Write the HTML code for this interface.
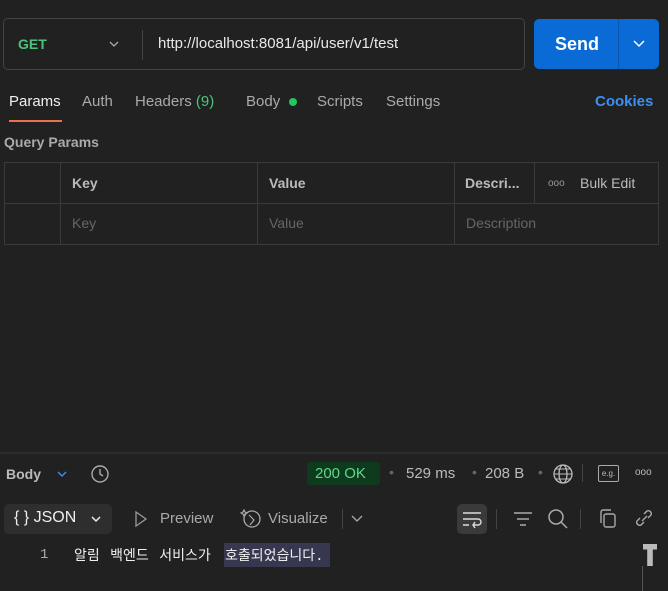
<!DOCTYPE html>
<html><head><meta charset="utf-8"><style>
*{margin:0;padding:0;box-sizing:border-box}
body{width:668px;height:591px;background:#212121;font-family:"Liberation Sans","Noto Sans CJK KR",sans-serif;color:#d0d0d0;position:relative;overflow:hidden;font-size:14px}
.a{position:absolute;white-space:nowrap}
</style></head><body>
<div class="a" style="left:3px;top:18px;width:522px;height:52px;border:1px solid #444;border-radius:5px;background:#212121"></div>
<div class="a" style="left:18px;top:36px;color:#4fc27a;font-weight:bold;font-size:14px">GET</div>
<svg class="a" style="left:108px;top:39px" width="12" height="10"><path d="M2 3l4 4 4-4" stroke="#aaa" stroke-width="1.3" fill="none"/></svg>
<div class="a" style="left:142px;top:30px;width:1px;height:30px;background:#444"></div>
<div class="a" style="left:158px;top:35px;color:#e8e8e8;font-size:15px">http://localhost:8081/api/user/v1/test</div>
<div class="a" style="left:534px;top:19px;width:125px;height:50px;background:#0a6bd6;border-radius:5px"></div>
<div class="a" style="left:618px;top:19px;width:1px;height:50px;background:#0957b0"></div>
<div class="a" style="left:555px;top:34px;color:#fff;font-weight:bold;font-size:18px">Send</div>
<svg class="a" style="left:632px;top:39px" width="14" height="10"><path d="M2 2l5 5 5-5" stroke="#fff" stroke-width="1.5" fill="none"/></svg>

<div class="a" style="left:9px;top:93px;color:#f0f0f0;font-size:15px">Params</div>
<div class="a" style="left:9px;top:120px;width:53px;height:2px;background:#e8734a"></div>
<div class="a" style="left:82px;top:93px;color:#aaa;font-size:15px">Auth</div>
<div class="a" style="left:135px;top:93px;color:#aaa;font-size:15px">Headers <span style="color:#4fc27a">(9)</span></div>
<div class="a" style="left:246px;top:93px;color:#aaa;font-size:15px">Body</div>
<div class="a" style="left:289px;top:98px;width:8px;height:8px;border-radius:50%;background:#22c55e"></div>
<div class="a" style="left:317px;top:93px;color:#aaa;font-size:15px">Scripts</div>
<div class="a" style="left:386px;top:93px;color:#aaa;font-size:15px">Settings</div>
<div class="a" style="left:595px;top:93px;color:#3d8ff0;font-weight:bold;font-size:15px">Cookies</div>
<div class="a" style="left:4px;top:134px;color:#aaa;font-weight:bold;font-size:14px">Query Params</div>

<div class="a" style="left:4px;top:162px;width:655px;height:83px;border:1px solid #3a3a3a"></div>
<div class="a" style="left:4px;top:203px;width:655px;height:1px;background:#3a3a3a"></div>
<div class="a" style="left:60px;top:162px;width:1px;height:83px;background:#3a3a3a"></div>
<div class="a" style="left:257px;top:162px;width:1px;height:83px;background:#3a3a3a"></div>
<div class="a" style="left:454px;top:162px;width:1px;height:83px;background:#3a3a3a"></div>
<div class="a" style="left:534px;top:162px;width:1px;height:41px;background:#3a3a3a"></div>
<div class="a" style="left:72px;top:175px;color:#bbb;font-weight:bold">Key</div>
<div class="a" style="left:269px;top:175px;color:#bbb;font-weight:bold">Value</div>
<div class="a" style="left:465px;top:175px;color:#bbb;font-weight:bold">Descri...</div>
<div class="a" style="left:548px;top:178px;color:#999;font-size:10px">ooo</div>
<div class="a" style="left:580px;top:175px;color:#bbb;font-size:14px">Bulk Edit</div>
<div class="a" style="left:72px;top:215px;color:#666">Key</div>
<div class="a" style="left:269px;top:215px;color:#666">Value</div>
<div class="a" style="left:466px;top:215px;color:#666">Description</div>

<div class="a" style="left:0;top:452px;width:668px;height:2px;background:#2c2c2c"></div>
<div class="a" style="left:6px;top:466px;color:#bbb;font-weight:bold;font-size:14px">Body</div>
<svg class="a" style="left:56px;top:469px" width="12" height="10"><path d="M2 3l4 4 4-4" stroke="#3d8ff0" stroke-width="1.4" fill="none"/></svg>
<svg class="a" style="left:89px;top:463px" width="22" height="22"><circle cx="11" cy="11" r="8" stroke="#aaa" stroke-width="1.4" fill="none"/><path d="M11 6v5l3 2" stroke="#aaa" stroke-width="1.4" fill="none"/></svg>
<div class="a" style="left:307px;top:462px;width:73px;height:23px;background:#0e3a1d;border-radius:3px"></div>
<div class="a" style="left:315px;top:465px;color:#5ed98a;font-size:15px">200 OK</div>
<div class="a" style="left:389px;top:464px;color:#666">•</div>
<div class="a" style="left:406px;top:465px;color:#bbb;font-size:15px">529 ms</div>
<div class="a" style="left:472px;top:464px;color:#666">•</div>
<div class="a" style="left:485px;top:465px;color:#bbb;font-size:15px">208 B</div>
<div class="a" style="left:538px;top:464px;color:#666">•</div>
<svg class="a" style="left:552px;top:463px" width="22" height="22"><circle cx="11" cy="11" r="9" stroke="#bbb" stroke-width="1.3" fill="none"/><ellipse cx="11" cy="11" rx="4" ry="9" stroke="#bbb" stroke-width="1.3" fill="none"/><path d="M2 11h18M4 6h14M4 16h14" stroke="#bbb" stroke-width="1.1"/></svg>
<div class="a" style="left:582px;top:464px;width:1px;height:18px;background:#444"></div>
<div class="a" style="left:598px;top:465px;width:21px;height:17px;border:1px solid #aaa;border-radius:2px;font-size:8px;color:#bbb;text-align:center;line-height:15px">e.g.</div>
<div class="a" style="left:635px;top:467px;color:#bbb;font-size:10px">ooo</div>

<div class="a" style="left:4px;top:504px;width:108px;height:30px;background:#2e2e2e;border-radius:5px"></div>
<div class="a" style="left:14px;top:509px;color:#eee;font-size:16px">{ } JSON</div>
<svg class="a" style="left:90px;top:514px" width="12" height="10"><path d="M2 3l4 4 4-4" stroke="#eee" stroke-width="1.5" fill="none"/></svg>
<svg class="a" style="left:133px;top:510px" width="16" height="18"><path d="M3 2l10 7-10 7z" stroke="#999" stroke-width="1.3" fill="none"/></svg>
<div class="a" style="left:160px;top:510px;color:#aaa;font-size:15px">Preview</div>
<svg class="a" style="left:240px;top:507px" width="24" height="22"><circle cx="12" cy="12" r="8" stroke="#aaa" stroke-width="1.3" fill="none"/><path d="M9 8l5 5-4 5M4 3l1 2 2 1-2 1-1 2-1-2-2-1 2-1z" stroke="#aaa" stroke-width="1.2" fill="none"/></svg>
<div class="a" style="left:268px;top:510px;color:#aaa;font-size:15px">Visualize</div>
<div class="a" style="left:342px;top:509px;width:1px;height:20px;background:#444"></div>
<svg class="a" style="left:350px;top:514px" width="14" height="10"><path d="M2 2l5 5 5-5" stroke="#aaa" stroke-width="1.3" fill="none"/></svg>
<div class="a" style="left:457px;top:504px;width:30px;height:30px;background:#3a3a3a;border-radius:5px"></div>
<svg class="a" style="left:461px;top:509px" width="22" height="20"><path d="M2 4h18M2 10h15a3 3 0 0 1 0 6h-5M14 13l-2 3 2 3M2 16h6" stroke="#ddd" stroke-width="1.4" fill="none"/></svg>
<div class="a" style="left:496px;top:509px;width:1px;height:20px;background:#444"></div>
<svg class="a" style="left:512px;top:509px" width="22" height="20"><path d="M2 4h18M5 10h12M8 16h6" stroke="#aaa" stroke-width="1.4"/></svg>
<svg class="a" style="left:546px;top:507px" width="24" height="24"><circle cx="10" cy="10" r="7" stroke="#aaa" stroke-width="1.5" fill="none"/><path d="M15 15l6 6" stroke="#aaa" stroke-width="1.5"/></svg>
<div class="a" style="left:580px;top:509px;width:1px;height:20px;background:#444"></div>
<svg class="a" style="left:597px;top:507px" width="22" height="24"><rect x="7" y="7" width="11" height="13" rx="2" stroke="#aaa" stroke-width="1.4" fill="none"/><path d="M4 16V5a2 2 0 0 1 2-2h8" stroke="#aaa" stroke-width="1.4" fill="none"/></svg>
<svg class="a" style="left:632px;top:507px" width="24" height="24"><path d="M10 14l5-5M8 11l-3 3a3 3 0 0 0 4 4l3-3M12 7l3-3a3 3 0 0 1 4 4l-3 3" stroke="#aaa" stroke-width="1.4" fill="none"/></svg>

<div class="a" style="left:40px;top:547px;color:#aaa;font-family:'Liberation Mono',monospace;font-size:14px">1</div>
<div class="a" style="left:224px;top:543px;width:106px;height:24px;background:#37374f"></div>
<div class="a" style="left:74px;top:545px;color:#f0f0f0;font-size:14px;font-family:'Liberation Mono','Noto Sans CJK KR',monospace;word-spacing:2px">알림 백엔드 서비스가</div>
<div class="a" style="left:225px;top:545px;color:#f0f0f0;font-size:14px;font-family:'Liberation Mono','Noto Sans CJK KR',monospace">호출되었습니다.</div>
<div class="a" style="left:643px;top:544px;width:14px;height:22px;background:#bbb;clip-path:polygon(0 0,100% 0,100% 25%,70% 25%,70% 100%,30% 100%,30% 25%,0 25%)"></div>
<div class="a" style="left:642px;top:566px;width:1px;height:25px;background:#555"></div>
</body></html>
